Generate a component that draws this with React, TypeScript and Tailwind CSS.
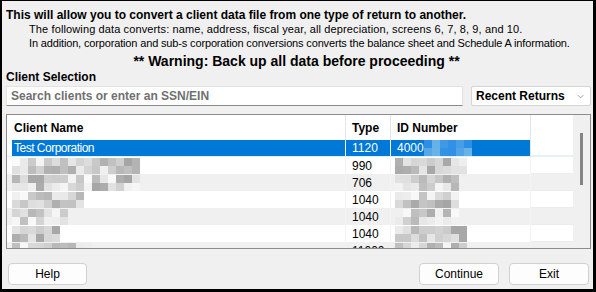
import { ChevronDown } from 'lucide-react';

type Row = { type: string; name: number; id: number; gray: boolean };

const rows: Row[] = [
  { type: '990', name: 16, id: 9, gray: false },
  { type: '706', name: 16, id: 8, gray: true },
  { type: '1040', name: 9, id: 8, gray: false },
  { type: '1040', name: 7, id: 8, gray: true },
  { type: '1040', name: 6, id: 9, gray: false },
  { type: '11000', name: 10, id: 9, gray: true },
];

// cheap seeded noise so the blurred cells stay the same each run
function shade(seed: number) {
  const x = Math.sin(seed * 12.9898) * 43758.5453;
  const f = x - Math.floor(x);
  const v = Math.round(165 + f * 85);
  return `rgb(${v},${v},${v})`;
}

function blueShade(seed: number) {
  const x = Math.sin(seed * 78.233) * 43758.5453;
  const f = x - Math.floor(x);
  const r = Math.round(40 + f * 80);
  const g = Math.round(140 + f * 50);
  return `rgb(${r},${g},230)`;
}

function Mosaic({ cols, seed, blue }: { cols: number; seed: number; blue?: boolean }) {
  return (
    <div className="flex flex-col">
      {[0, 1].map((r) => (
        <div key={r} className="flex">
          {Array.from({ length: cols }).map((_, c) => (
            <div
              key={c}
              className="w-[8px] h-[8px]"
              style={{ background: blue ? blueShade(seed + r * 31 + c) : shade(seed + r * 31 + c) }}
            />
          ))}
        </div>
      ))}
    </div>
  );
}

export default function App() {
  return (
    <div
      className="w-[596px] h-[292px] border-t border-l-2 border-r-[3px] border-b-[3px] border-black bg-[#f0f0f0] text-black flex flex-col overflow-hidden"
      style={{ fontFamily: '"Liberation Sans", Arial, sans-serif' }}
    >
      <div className="pl-[4px] pr-[2px] pt-[7px] flex flex-col">
        <div className="h-[14px] leading-[14px] text-[12px] font-bold">
          This will allow you to convert a client data file from one type of return to another.
        </div>
        <div className="pl-[23px] h-[14px] leading-[14px] text-[11px] tracking-[0.12px]">
          The following data converts: name, address, fiscal year, all depreciation, screens 6, 7, 8, 9, and 10.
        </div>
        <div className="pl-[23px] h-[14px] leading-[14px] text-[11px] tracking-[-0.15px]">
          In addition, corporation and sub-s corporation conversions converts the balance sheet and Schedule A information.
        </div>
        <div className="mt-[2px] h-[18px] leading-[18px] text-[14px] font-bold text-center pr-[4px]">
          ** Warning: Back up all data before proceeding **
        </div>
        <div className="h-[14px] leading-[14px] text-[12px] font-bold">Client Selection</div>

        <div className="mt-[2px] flex gap-[8px]">
          <div className="flex-1 h-[20px] bg-white border border-[#e3e3e3] border-b-[#8a8a8a] flex items-center pl-[4px] text-[12px] font-bold text-[#707070]">
            Search clients or enter an SSN/EIN
          </div>
          <div className="w-[120px] h-[20px] bg-white border border-[#d4d4d4] rounded-[2px] flex items-center justify-between pl-[4px] pr-[4px] text-[12px] font-bold">
            <span>Recent Returns</span>
            <ChevronDown className="w-[11px] h-[11px] text-[#8a8a8a]" strokeWidth={1.5} />
          </div>
        </div>

        <div className="mt-[8px] h-[135px] bg-white border border-[#8c8c8c] flex overflow-hidden">
          <div className="flex-1 flex flex-col">
            <div className="h-[25px] flex text-[12px] font-bold shrink-0">
              <div className="w-[339px] border-r border-[#e5e5e5] pl-[7px] flex items-center">Client Name</div>
              <div className="w-[45px] border-r border-[#e5e5e5] pl-[6px] flex items-center">Type</div>
              <div className="w-[140px] border-r border-[#e5e5e5] pl-[6px] flex items-center">ID Number</div>
              <div className="flex-1" />
            </div>
            <div className="h-[17px] flex text-[12px] shrink-0 border-b border-[#dff2f8]">
              <div className="w-[5px] bg-white" />
              <div className="w-[334px] bg-[#0078d7] text-white border-r border-white pl-[2px] flex items-center tracking-[-0.5px]">
                Test Corporation
              </div>
              <div className="w-[45px] bg-[#0078d7] text-white border-r border-white pl-[6px] flex items-center">1120</div>
              <div className="w-[140px] bg-[#0078d7] text-white border-r border-[#e5e5e5] pl-[6px] flex items-center">
                <span>4000</span>
                <div className="h-[16px] overflow-hidden flex items-start">
                  <Mosaic cols={6} seed={900} blue />
                </div>
              </div>
              <div className="flex-1 border-b border-[#eeeeee]" />
            </div>
            {rows.map((r, i) => (
              <div
                key={i}
                className={`h-[17px] flex text-[12px] shrink-0 ${r.gray ? 'bg-[#f0f0f0]' : 'bg-white'}`}
              >
                <div className="w-[339px] border-r border-[#f4f4f4] pl-[5px] flex items-center">
                  <Mosaic cols={r.name} seed={i * 97 + 13} />
                </div>
                <div className="w-[45px] border-r border-[#f4f4f4] pl-[6px] flex items-center">{r.type}</div>
                <div className="w-[140px] border-r border-[#f4f4f4] pl-[4px] flex items-center">
                  <Mosaic cols={r.id} seed={i * 53 + 400} />
                </div>
                <div className="flex-1 border-b border-[#ececec]" />
              </div>
            ))}
          </div>
          <div className="w-[17px] bg-[#f0f0f0] flex justify-center pt-[18px]">
            <div className="w-[3px] h-[52px] bg-[#858585]" />
          </div>
        </div>

        <div className="mt-[14px] flex items-center text-[12px] pr-[2px]">
          <button className="w-[79px] h-[22px] ml-[2px] bg-[#fdfdfd] border border-[#d0d0d0] rounded-[4px]">Help</button>
          <div className="flex-1" />
          <button className="w-[80px] h-[22px] bg-[#fdfdfd] border border-[#d0d0d0] rounded-[4px]">Continue</button>
          <button className="w-[80px] h-[22px] ml-[10px] bg-[#fdfdfd] border border-[#d0d0d0] rounded-[4px]">Exit</button>
        </div>
      </div>
    </div>
  );
}
